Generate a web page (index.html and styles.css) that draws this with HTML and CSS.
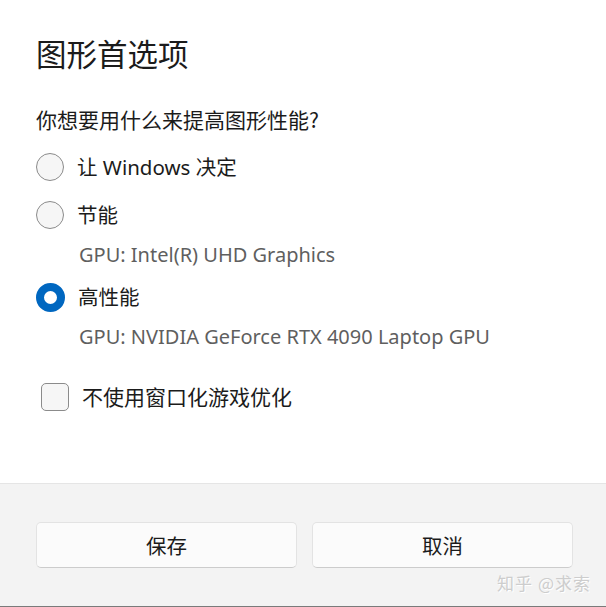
FILE: index.html
```html
<!DOCTYPE html>
<html lang="zh-CN">
<head>
<meta charset="utf-8">
<title>图形首选项</title>
<link rel="stylesheet" href="styles.css">
</head>
<body>
<div class="dialog">
  <div class="content">
    <h1 class="title">图形首选项</h1>
    <p class="question">你想要用什么来提高图形性能?</p>
    <div class="option">
      <span class="radio"></span>
      <span class="label">让 Windows 决定</span>
    </div>
    <div class="option">
      <span class="radio"></span>
      <span class="label">节能</span>
    </div>
    <div class="sub">GPU: Intel(R) UHD Graphics</div>
    <div class="option option-sel">
      <span class="radio radio-on"></span>
      <span class="label">高性能</span>
    </div>
    <div class="sub">GPU: NVIDIA GeForce RTX 4090 Laptop GPU</div>
    <div class="check-row">
      <span class="checkbox"></span>
      <span class="label label-check">不使用窗口化游戏优化</span>
    </div>
  </div>
  <div class="footer">
    <button class="btn">保存</button>
    <button class="btn">取消</button>
    <span class="watermark">知乎 @求索</span>
  </div>
</div>
</body>
</html>
```
FILE: styles.css
```css
html, body {
  margin: 0;
  padding: 0;
  background: #ffffff;
}
body {
  font-family: "Noto Sans", "Noto Sans CJK SC", sans-serif;
  color: #1b1b1b;
}
.dialog {
  width: 606px;
  height: 607px;
  display: flex;
  flex-direction: column;
  overflow: hidden;
}
.content {
  height: 484px;
  box-sizing: border-box;
  padding: 33px 36px 0 36px;
  background: #ffffff;
  border-bottom: 1px solid #e5e5e5;
}
.title {
  margin: 0;
  font-family: "Noto Sans CJK SC", sans-serif;
  font-size: 30.5px;
  font-weight: 400;
  line-height: 40px;
  color: #1b1b1b;
}
.question {
  margin: 32px 0 0 0;
  font-size: 21px;
  line-height: 28px;
  font-family: "Noto Sans CJK SC", sans-serif;
}
.option {
  display: flex;
  align-items: center;
  height: 48px;
  gap: 13px;
}
.question + .option {
  margin-top: 10px;
}
.option-sel {
  margin-top: 6px;
}
.radio {
  width: 26px;
  height: 26px;
  border-radius: 50%;
  border: 1.5px solid #8b8b8b;
  background: #f6f6f6;
  flex: none;
}
.radio-on {
  width: 29px;
  height: 29px;
  box-sizing: border-box;
  border: 8.5px solid #0067c0;
  background: #ffffff;
}
.label {
  font-size: 20.5px;
  line-height: 28px;
}
.label-check {
  font-size: 21px;
}
.sub {
  margin-top: 4px;
  padding-left: 43px;
  font-size: 20px;
  line-height: 24px;
  color: #5f5f5f;
}
.check-row {
  display: flex;
  align-items: center;
  gap: 13px;
  height: 48px;
  margin-top: 24px;
  padding-left: 5px;
}
.checkbox {
  width: 26px;
  height: 26px;
  border: 1.5px solid #8b8b8b;
  border-radius: 5px;
  background: #f6f6f6;
  flex: none;
}
.footer {
  position: relative;
  flex: 1;
  background: #f3f3f3;
  display: flex;
  gap: 15px;
  padding: 38px 33px 0 36px;
  align-items: flex-start;
  border-bottom: 1px solid #7a7a7a;
}
.btn {
  flex: 1;
  height: 46px;
  font-family: "Noto Sans CJK SC", sans-serif;
  font-size: 20.5px;
  color: #1b1b1b;
  background: #fbfbfb;
  border: 1px solid #e3e3e3;
  border-bottom-color: #cccccc;
  border-radius: 5px;
  padding: 0;
}
.watermark {
  position: absolute;
  right: 15px;
  bottom: 12px;
  font-family: "Noto Sans CJK SC", sans-serif;
  font-size: 17px;
  line-height: 22px;
  color: #cdcdcd;
  text-shadow: 1px 1px 0 #ffffff;
  letter-spacing: 1px;
}
```
